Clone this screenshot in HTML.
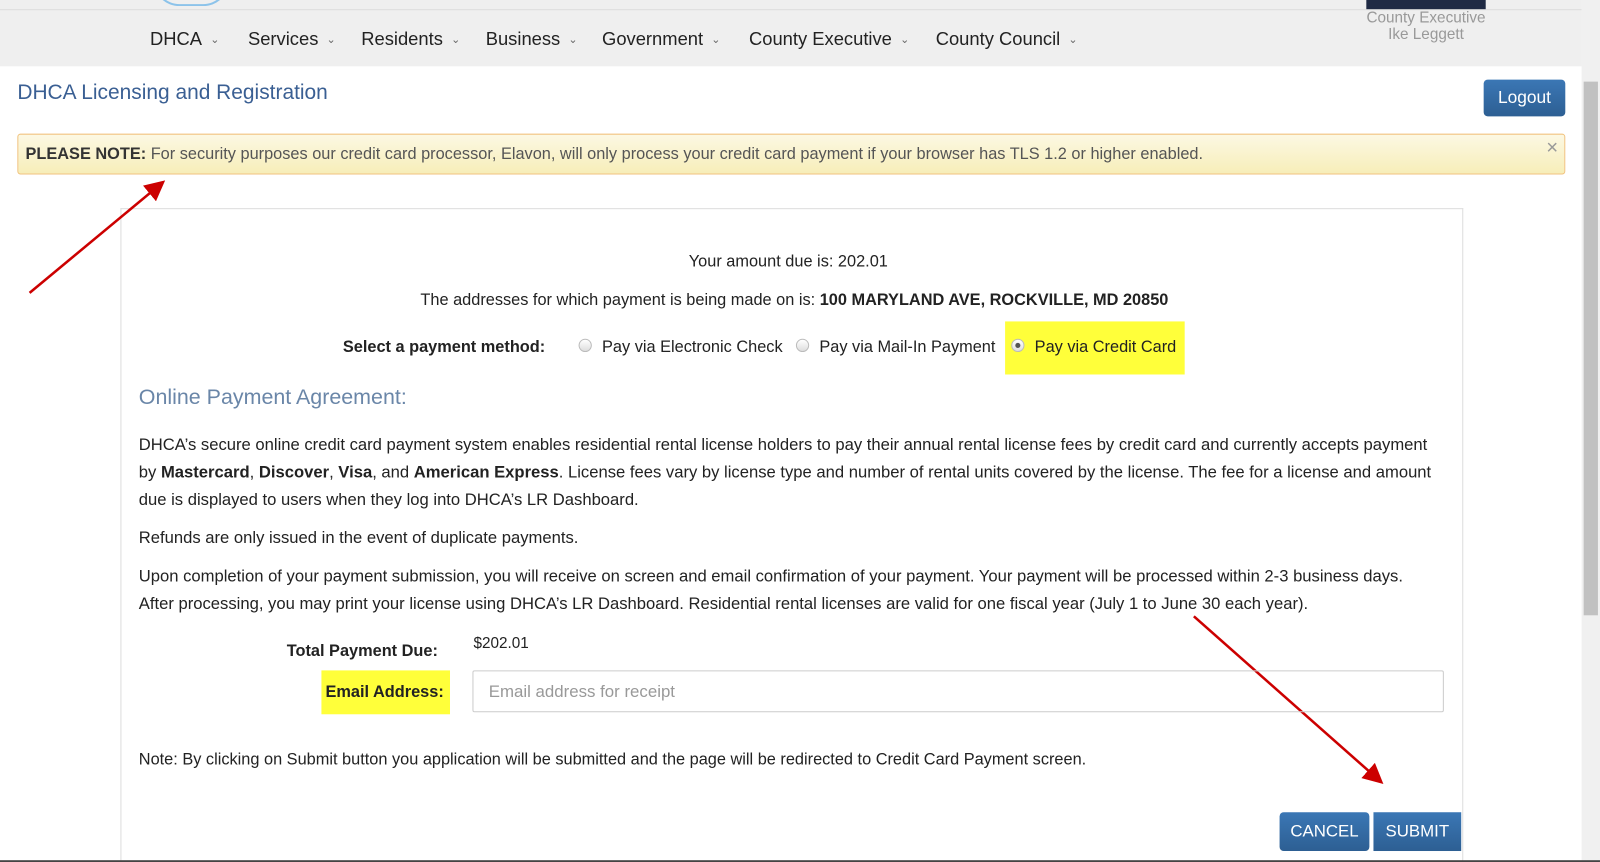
<!DOCTYPE html>
<html><head><meta charset="utf-8"><style>
*{box-sizing:border-box;margin:0;padding:0}
body{width:1600px;height:862px;overflow:hidden;background:#fff;font-family:"Liberation Sans",sans-serif;color:#333;position:relative}
#w{position:absolute;left:0;top:0;width:1568px;height:845px;transform:scale(1.0204);transform-origin:0 0;overflow:hidden}
.top{position:absolute;left:0;top:0;width:1550px;height:65px;background:#efefef}
.topline{position:absolute;left:0;top:9px;width:1550px;height:1px;background:#ddd}
.logo{position:absolute;left:150px;top:-20px;width:75px;height:26px;border-radius:0 0 40px 40px;border:2px solid #8cc3ea;border-top:none}
.photo{position:absolute;left:1339px;top:0;width:117px;height:9px;background:#1f2a44}
.exec{position:absolute;left:1320px;top:10px;width:155px;text-align:center;color:#999;font-size:15px;line-height:16px}
.nav{position:absolute;top:28px;font-size:18px;color:#222}
.nav span{position:absolute;white-space:nowrap}
.nav i{font-style:normal;font-size:11px;color:#666;margin-left:8px;position:relative;top:-2px}
.sb{position:absolute;left:1550px;top:0;width:18px;height:845px;background:#f0f0f0}
.sb .th{position:absolute;left:2px;top:80px;width:14px;height:523px;background:#c1c1c1}
.bottom{position:absolute;left:0;top:843px;width:1568px;height:3px;background:#444}
h1{position:absolute;left:17px;top:79px;font-size:20.5px;font-weight:normal;color:#3a5f93}
.logout{position:absolute;left:1454px;top:78px;width:80px;height:36px;border-radius:4px;background:linear-gradient(#3b77b5,#2d5f93);color:#fff;font-size:17px;text-align:center;line-height:36px}
.alert{position:absolute;left:17px;top:131px;width:1517px;height:40px;background:linear-gradient(#fcf8e3,#f7eeb9);border:1px solid #f1c27d;border-radius:3px;font-size:16px;padding:0 0 0 7px;line-height:39px;color:#555;white-space:nowrap}
.alert b{color:#333}
.alert .x{position:absolute;right:6px;top:-6px;color:#999;font-size:20px}
.card{position:absolute;left:118px;top:204px;width:1316px;height:660px;border:1px solid #ddd;border-bottom:none}
.t{position:absolute;font-size:16px;white-space:nowrap;color:#222}
.radio{position:absolute;width:13px;height:13px;border-radius:50%;border:1px solid #bbb;background:linear-gradient(#fff,#ddd)}
.hl{position:absolute;background:#ffff3a}
p.b{position:absolute;left:136px;width:1274px;font-size:16.3px;line-height:27px;color:#222}
.input{position:absolute;left:463px;top:657px;width:952px;height:41px;border:1px solid #ccc;border-radius:2px;font-size:16.5px;color:#999;padding-left:15px;line-height:40px}
.btn{position:absolute;top:796px;height:38px;background:linear-gradient(#3b77b5,#2d5f93);color:#fff;font-size:16.5px;text-align:center;line-height:38px;border-radius:4px}
</style></head><body><div id="w">
<div class="top"></div><div class="topline"></div>
<div class="logo"></div><div class="photo"></div>
<div class="exec">County Executive<br>Ike Leggett</div>
<div class="nav">
<span style="left:147px">DHCA<i>⌄</i></span>
<span style="left:243px">Services<i>⌄</i></span>
<span style="left:354px">Residents<i>⌄</i></span>
<span style="left:476px">Business<i>⌄</i></span>
<span style="left:590px">Government<i>⌄</i></span>
<span style="left:734px">County Executive<i>⌄</i></span>
<span style="left:917px">County Council<i>⌄</i></span>
</div>
<div class="sb"><div class="th"></div></div>
<h1>DHCA Licensing and Registration</h1>
<div class="logout">Logout</div>
<div class="alert"><b>PLEASE NOTE:</b> For security purposes our credit card processor, Elavon, will only process your credit card payment if your browser has TLS 1.2 or higher enabled.<span class="x">×</span></div>
<div class="card"></div>
<svg style="position:absolute;left:0;top:0" width="1568" height="845">
<defs><marker id="a" markerWidth="8" markerHeight="8" refX="6" refY="4" orient="auto"><path d="M0,0 L8,4 L0,8 Z" fill="#c00"/></marker></defs>
<line x1="29" y1="287" x2="158" y2="180" stroke="#c00" stroke-width="2.5" marker-end="url(#a)"/>
<line x1="1170" y1="604" x2="1352" y2="765" stroke="#c00" stroke-width="2.5" marker-end="url(#a)"/>
</svg>
<div class="t" style="left:675px;top:248px">Your amount due is: 202.01</div>
<div class="t" style="left:412px;top:286px">The addresses for which payment is being made on is: <b>100 MARYLAND AVE, ROCKVILLE, MD 20850</b></div>
<div class="hl" style="left:985px;top:315px;width:176px;height:52px"></div>
<div class="t" style="left:336px;top:332px"><b>Select a payment method:</b></div>
<div class="radio" style="left:567px;top:332px"></div>
<div class="t" style="left:590px;top:332px">Pay via Electronic Check</div>
<div class="radio" style="left:780px;top:332px"></div>
<div class="t" style="left:803px;top:332px">Pay via Mail-In Payment</div>
<div class="radio" style="left:991px;top:332px"><div style="width:5px;height:5px;border-radius:50%;background:#555;margin:3px"></div></div>
<div class="t" style="left:1014px;top:332px">Pay via Credit Card</div>
<div class="t" style="left:136px;top:378px;font-size:21px;color:#6a86a8">Online Payment Agreement:</div>
<p class="b" style="top:423px">DHCA’s secure online credit card payment system enables residential rental license holders to pay their annual rental license fees by credit card and currently accepts payment by <b>Mastercard</b>, <b>Discover</b>, <b>Visa</b>, and <b>American Express</b>. License fees vary by license type and number of rental units covered by the license. The fee for a license and amount due is displayed to users when they log into DHCA’s LR Dashboard.</p>
<p class="b" style="top:514px">Refunds are only issued in the event of duplicate payments.</p>
<p class="b" style="top:552px">Upon completion of your payment submission, you will receive on screen and email confirmation of your payment. Your payment will be processed within 2-3 business days. After processing, you may print your license using DHCA’s LR Dashboard. Residential rental licenses are valid for one fiscal year (July 1 to June 30 each year).</p>
<div class="t" style="left:281px;top:630px"><b>Total Payment Due:</b></div>
<div class="t" style="left:464px;top:622px;font-size:15px">$202.01</div>
<div class="hl" style="left:315px;top:657px;width:126px;height:43px"></div>
<div class="t" style="left:319px;top:670px"><b>Email Address:</b></div>
<div class="input">Email address for receipt</div>
<div class="t" style="left:136px;top:736px">Note: By clicking on Submit button you application will be submitted and the page will be redirected to Credit Card Payment screen.</div>
<div class="btn" style="left:1254px;width:88px">CANCEL</div>
<div class="btn" style="left:1346px;width:86px;border-radius:0">SUBMIT</div>
<div class="bottom"></div>
</div></body></html>
